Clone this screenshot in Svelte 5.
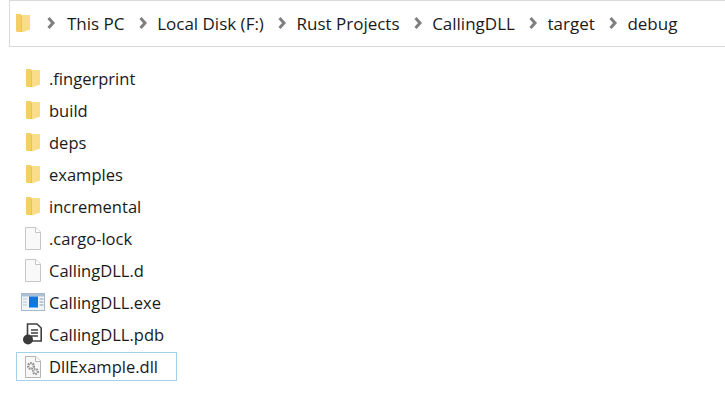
<script>
  const crumbs = ['This PC', 'Local Disk (F:)', 'Rust Projects', 'CallingDLL', 'target', 'debug'];
  const files = [
    { name: '.fingerprint', type: 'folder' },
    { name: 'build', type: 'folder' },
    { name: 'deps', type: 'folder' },
    { name: 'examples', type: 'folder' },
    { name: 'incremental', type: 'folder' },
    { name: '.cargo-lock', type: 'file' },
    { name: 'CallingDLL.d', type: 'file' },
    { name: 'CallingDLL.exe', type: 'exe' },
    { name: 'CallingDLL.pdb', type: 'pdb' },
    { name: 'DllExample.dll', type: 'dll', selected: true }
  ];
</script>

{#snippet folder()}
  <svg class="icon" width="14" height="20" viewBox="0 0 14 20">
    <path d="M0 1h4.5L6 2.5V19H1l-1-1z" fill="#f4cf66" />
    <path d="M6 2h8v14.5L6 19.5z" fill="#fadd88" />
    <path d="M5.5 2.5v16.5" stroke="#ecc257" stroke-width="1" />
  </svg>
{/snippet}

<main class="page">
  <nav class="bar">
    {@render folder()}
    {#each crumbs as c}
      <svg class="chev" width="9" height="12" viewBox="0 0 9 12">
        <path d="M1.5 1 6 6 1.5 11" fill="none" stroke="#7f7f7f" stroke-width="3" />
      </svg>
      <span class="crumb">{c}</span>
    {/each}
  </nav>
  <ul class="list">
    {#each files as f}
      <li class="row" class:selected={f.selected}>
        <span class="slot">
          {#if f.type === 'folder'}
            {@render folder()}
          {:else if f.type === 'file'}
            <svg width="18" height="23" viewBox="0 0 18 23">
              <path d="M1.5 .5H12L16.5 5V22.5H1.5Z" fill="#f9f9f9" stroke="#c6c6c6" />
              <path d="M11.5 .5V5.5H16.5" fill="#fff" stroke="#c6c6c6" />
            </svg>
          {:else if f.type === 'exe'}
            <svg width="24" height="18" viewBox="0 0 24 18">
              <rect x=".5" y=".5" width="23" height="17" fill="#f1f5f9" stroke="#a8b9c9" />
              <rect x="1" y="1" width="22" height="2.5" fill="#a9c0d6" />
              <rect x="8" y="3.5" width="9" height="11" fill="#0f78dc" />
              <path d="M18.5 6h4M18.5 9h4M18.5 12h4" stroke="#8d9aa6" stroke-width="1" />
              <path d="M2 6h4M2 9h4M2 12h4" stroke="#bbc6d0" stroke-width="1" />
            </svg>
          {:else if f.type === 'pdb'}
            <svg width="20" height="22" viewBox="0 0 20 22">
              <path d="M4.5 1H14L18.2 5V18H4.5Z" fill="#fff" stroke="#404040" stroke-width="1.6" />
              <path d="M8 7h7M8 10h7M8 13h7" stroke="#404040" stroke-width="1.5" />
              <circle cx="5" cy="16.5" r="5" fill="#3a3a3a" />
            </svg>
          {:else}
            <svg width="18" height="22" viewBox="0 0 18 22">
              <path d="M1.5 .5H12L16.5 5V21.5H1.5Z" fill="#f7f7f7" stroke="#b4b4b4" />
              <path d="M11.5 .5V5.5H16.5" fill="#fff" stroke="#b4b4b4" />
              <circle cx="7" cy="10" r="2.8" fill="none" stroke="#8f8f8f" stroke-width="2.4" stroke-dasharray="1.6 .8" />
              <circle cx="11.5" cy="15.5" r="2.4" fill="none" stroke="#8f8f8f" stroke-width="2.2" stroke-dasharray="1.4 .8" />
            </svg>
          {/if}
        </span>
        <span class="name">{f.name}</span>
      </li>
    {/each}
  </ul>
</main>

<style>
  :global(body) {
    margin: 0;
    background: #fff;
  }
  .page {
    width: 725px;
    height: 405px;
    overflow: hidden;
    font-family: "Open Sans", "Noto Sans", sans-serif;
    color: #1a1a1a;
    font-size: 16.55px;
  }
  .bar {
    display: flex;
    align-items: center;
    margin-left: 9px;
    height: 44px;
    border: 1px solid #d9d9d9;
    border-right: none;
    padding-left: 6px;
    padding-bottom: 1px;
    box-sizing: content-box;
    white-space: nowrap;
    font-size: 17px;
  }
  .icon {
    display: block;
  }
  .chev {
    margin-left: 14px;
    margin-right: 9.6px;
  }
  .bar > .icon + .chev {
    margin-left: 17px;
    margin-right: 11px;
  }
  .list {
    list-style: none;
    margin: 15px 0 0;
    padding: 0 0 0 16px;
  }
  .row {
    display: flex;
    align-items: center;
    width: 160px;
    height: 32px;
    box-sizing: border-box;
  }
  .slot {
    width: 33px;
    display: flex;
    justify-content: center;
    flex: none;
  }
  .selected {
    width: 161px;
    height: 29px;
    margin-top: 2px;
    border: 1px solid #a3d2e8;
  }
  .selected .slot {
    margin-left: -1px;
  }
</style>
